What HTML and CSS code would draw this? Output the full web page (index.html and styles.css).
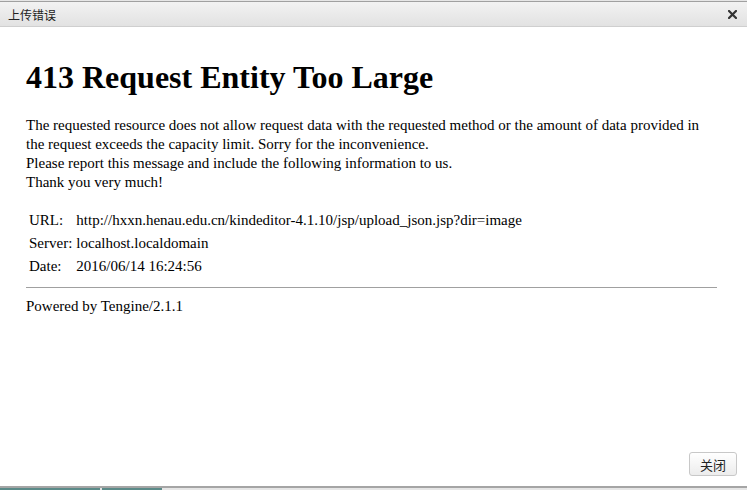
FILE: index.html
```html
<!DOCTYPE html>
<html lang="zh-CN">
<head>
    <meta charset="UTF-8">
    <title>上传错误</title>
    <link rel="stylesheet" href="styles.css">
</head>
<body>

    <div class="dialog">
        <div class="dialog-title">
            <span class="title-text">上传错误</span>
            <svg class="close-x" width="9" height="9" viewBox="0 0 9 9">
                <path d="M1 1 L8 8 M8 1 L1 8" stroke="#333" stroke-width="2.2" stroke-linecap="square"/>
            </svg>
        </div>

        <div class="dialog-body">
            <div class="page">
                <h1>413 Request Entity Too Large</h1>
                <p>The requested resource does not allow request data with the requested method or the amount of data provided in the request exceeds the capacity limit. Sorry for the inconvenience.<br>
                Please report this message and include the following information to us.<br>
                Thank you very much!</p>
                <table>
                    <tr>
                        <td>URL:</td>
                        <td>http://hxxn.henau.edu.cn/kindeditor-4.1.10/jsp/upload_json.jsp?dir=image</td>
                    </tr>
                    <tr>
                        <td>Server:</td>
                        <td>localhost.localdomain</td>
                    </tr>
                    <tr>
                        <td>Date:</td>
                        <td>2016/06/14 16:24:56</td>
                    </tr>
                </table>
                <hr>
                <div class="powered">Powered by Tengine/2.1.1</div>
            </div>
        </div>

        <div class="dialog-footer">
            <button class="btn">关闭</button>
        </div>
    </div>

    <div class="taskbar">
        <span class="task"></span>
        <span class="task short"></span>
    </div>

</body>
</html>
```

FILE: styles.css
```css
body {
    margin: 0;
    background-color: #e6e6e6;
    font-family: "Liberation Serif", "Noto Sans CJK SC", serif;
}

.dialog {
    display: flex;
    flex-direction: column;
    height: 487px;
    box-sizing: border-box;
    border-top: 1px solid #a0a0a0;
    border-bottom: 2px solid #a5a5a5;
    margin-top: 1px;
    background-color: #ffffff;
}

.dialog-title {
    display: flex;
    justify-content: space-between;
    align-items: center;
    height: 24px;
    padding: 0 10px 0 8px;
    background: linear-gradient(#f2f2f2, #e2e2e2);
    border-bottom: 1px solid #cfcfcf;
    font-family: "Noto Sans CJK SC", sans-serif;
    font-size: 12px;
    color: #222;
}

.close-x {
    display: block;
}

.dialog-body {
    flex: 1;
    padding: 0 22px 0 18px;
}

.page {
    padding: 8px;
    font-size: 15px;
    line-height: 19px;
    color: #000;
}

h1 {
    font-size: 32px;
    line-height: normal;
    margin: 24px 0 20px;
}

p {
    margin: 0 0 16px;
}

table {
    border-spacing: 2px;
}

td {
    padding: 1px;
}

hr {
    border: none;
    border-top: 1px solid #a0a0a0;
    margin: 8px 0 9px;
}

.dialog-footer {
    display: flex;
    justify-content: flex-end;
    padding: 0 10px 10px;
}

.btn {
    font-family: "Noto Sans CJK SC", sans-serif;
    font-size: 13px;
    color: #222;
    height: 24px;
    padding: 0 10px;
    background: linear-gradient(#ffffff, #ececec);
    border: 1px solid #c8c8c8;
    border-radius: 3px;
}

.taskbar {
    display: flex;
    height: 2px;
}

.task {
    width: 100px;
    background-color: #5b8a88;
}

.task.short {
    width: 60px;
    margin-left: 2px;
}
```
